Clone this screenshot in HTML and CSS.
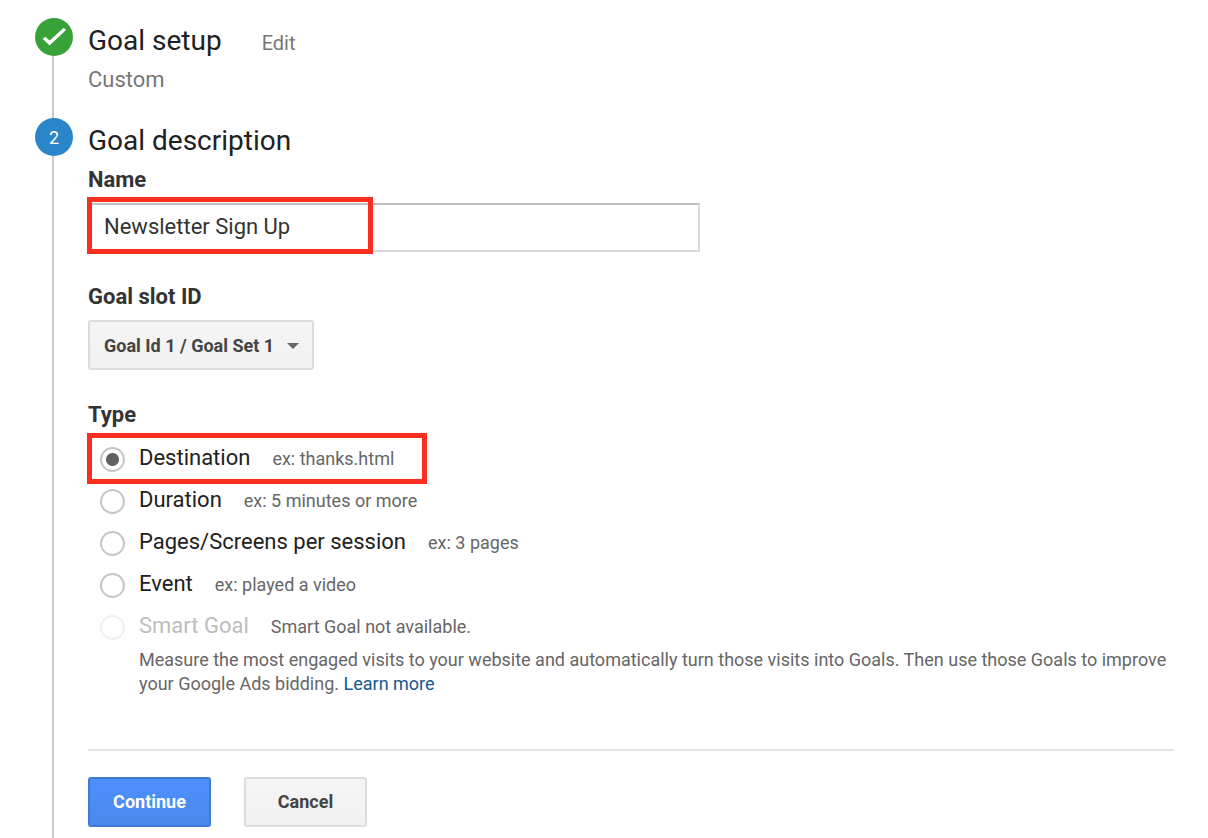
FILE: index.html
```html
<!DOCTYPE html>
<html lang="en">

<head>
    <meta charset="UTF-8">
    <meta name="viewport" content="width=device-width, initial-scale=1">
    <title>Goal setup</title>
    <link rel="stylesheet" href="styles.css">
</head>

<body>
    <main class="wizard">

        <!-- Step 1: done -->
        <section class="step">
            <div class="step-rail">
                <span class="step-badge done">
                    <svg width="38" height="38" viewBox="0 0 38 38" role="img" aria-label="Done">
                        <path d="M7.8 21 L10.2 18.7 L14.8 22.6 L28.7 9.8 L31 12 L14.6 27.6 Z" fill="#fff" />
                    </svg>
                </span>
            </div>
            <div class="step-body">
                <div class="step-heading">
                    <h2>Goal setup</h2>
                    <a href="#" class="edit-link">Edit</a>
                </div>
                <p class="step-summary">Custom</p>
            </div>
        </section>

        <!-- Step 2: current -->
        <section class="step current">
            <div class="step-rail">
                <span class="step-badge">2</span>
            </div>
            <form class="step-body">
                <div class="step-heading">
                    <h2>Goal description</h2>
                </div>

                <div class="form-group">
                    <label class="group-label" for="goalName">Name</label>
                    <div class="name-field">
                        <input type="text" id="goalName" name="goalName" value="Newsletter Sign Up">
                    </div>
                </div>

                <div class="form-group">
                    <label class="group-label" for="goalSlot">Goal slot ID</label>
                    <div class="select-box">
                        <select id="goalSlot" name="goalSlot">
                            <option>Goal Id 1 / Goal Set 1</option>
                        </select>
                    </div>
                </div>

                <fieldset class="type-group">
                    <legend class="group-label">Type</legend>
                    <div class="option highlighted">
                        <input type="radio" id="destination" name="goalType" checked>
                        <label for="destination">Destination</label>
                        <span class="hint">ex: thanks.html</span>
                    </div>
                    <div class="option">
                        <input type="radio" id="duration" name="goalType">
                        <label for="duration">Duration</label>
                        <span class="hint">ex: 5 minutes or more</span>
                    </div>
                    <div class="option">
                        <input type="radio" id="pages" name="goalType">
                        <label for="pages">Pages/Screens per session</label>
                        <span class="hint">ex: 3 pages</span>
                    </div>
                    <div class="option">
                        <input type="radio" id="event" name="goalType">
                        <label for="event">Event</label>
                        <span class="hint">ex: played a video</span>
                    </div>
                    <div class="option">
                        <input type="radio" id="smartGoal" name="goalType" disabled>
                        <label for="smartGoal">Smart Goal</label>
                        <span class="hint">Smart Goal not available.</span>
                    </div>
                    <p class="option-note">Measure the most engaged visits to your website and automatically turn those visits into Goals. Then use those Goals to improve your Google Ads bidding. <a href="#">Learn more</a></p>
                </fieldset>

                <div class="actions">
                    <button type="button" class="btn primary">Continue</button>
                    <button type="button" class="btn">Cancel</button>
                </div>
            </form>
        </section>

    </main>
</body>

</html>
```

FILE: styles.css
```css
*,
*::after {
    box-sizing: border-box;
}

body {
    margin: 0;
    background: #ffffff;
    color: #212121;
    font-family: Roboto, "Liberation Sans", sans-serif;
    font-size: 18px;
}

h2,
p {
    margin: 0;
    font-weight: 400;
}

.wizard {
    display: flex;
    flex-direction: column;
    min-height: 100vh;
    padding: 18px 34px 0 35px;
}

/* Steps */
.step {
    display: flex;
    gap: 15px;
}

.step.current {
    flex: 1;
}

.step-rail {
    display: flex;
    flex-direction: column;
    align-items: center;
    flex: 0 0 38px;
}

.step-rail::after {
    content: "";
    flex: 1;
    width: 2px;
    margin-right: 2px;
    background: #cacaca;
}

.step-badge {
    display: flex;
    align-items: center;
    justify-content: center;
    width: 38px;
    height: 38px;
    border-radius: 50%;
    background: #2a85c9;
    color: #ffffff;
    font-size: 18px;
}

.step-badge.done {
    background: #38a138;
}

.step-body {
    flex: 1;
    min-width: 0;
    padding-bottom: 11px;
}

.step-heading {
    display: flex;
    align-items: baseline;
    gap: 40px;
}

.step-heading h2 {
    font-size: 28px;
    line-height: 46px;
}

.edit-link {
    color: #777777;
    font-size: 20px;
    text-decoration: none;
}

.step-summary {
    color: #777777;
    font-size: 22px;
    line-height: 32px;
    margin-bottom: 11px;
}

/* Form */
.form-group {
    margin-bottom: 29px;
}

.group-label {
    display: block;
    padding: 0;
    margin-bottom: 7px;
    color: #333333;
    font-size: 22px;
    font-weight: 700;
    line-height: 32px;
}

.name-field {
    position: relative;
    max-width: 612px;
}

.name-field input {
    display: block;
    width: 100%;
    height: 49px;
    padding: 0 14px 2px;
    border: 2px solid #d9d9d9;
    border-top-color: #c0c0c0;
    color: #333333;
    font-family: inherit;
    font-size: 22px;
}

/* Red frames drawn over the important fields */
.name-field::after,
.highlighted::after {
    content: "";
    position: absolute;
    border: 5px solid #fa2f20;
    pointer-events: none;
}

.name-field::after {
    top: -6px;
    left: -1px;
    width: 286px;
    height: 57px;
}

.select-box {
    position: relative;
    width: 226px;
}

.select-box::after {
    content: "";
    position: absolute;
    top: 23px;
    right: 15px;
    border: 6px solid transparent;
    border-top-color: #666666;
    border-bottom: 0;
    pointer-events: none;
}

.select-box select {
    display: block;
    appearance: none;
    width: 100%;
    height: 50px;
    padding: 0 14px;
    border: 2px solid #dcdcdc;
    border-radius: 3px;
    background: linear-gradient(#f5f5f5, #f1f1f1);
    color: #444444;
    font-family: inherit;
    font-size: 18px;
    font-weight: 700;
}

.type-group {
    min-width: 0;
    margin: 0;
    padding: 0;
    border: 0;
}

.option {
    position: relative;
    display: flex;
    align-items: baseline;
    width: fit-content;
    height: 42px;
    padding-left: 12px;
    line-height: 40px;
}

.option input {
    appearance: none;
    align-self: center;
    width: 25px;
    height: 25px;
    margin: 0 14px 0 0;
    border: 2px solid #c6c6c6;
    border-radius: 50%;
    background: #ffffff;
}

.option input:checked {
    background: radial-gradient(circle, #616161 6px, #ffffff 7px);
}

.option input:disabled {
    border-color: #f0f0f0;
}

.option label {
    margin-right: 22px;
    font-size: 22px;
}

.option input:disabled + label {
    color: #bdbdbd;
}

.hint,
.option-note {
    color: #666666;
    font-size: 18px;
}

.highlighted::after {
    top: -5px;
    left: -1px;
    right: -33px;
    height: 51px;
}

.option-note {
    padding-left: 51px;
    line-height: 24px;
}

.option-note a {
    color: #15598f;
    text-decoration: none;
}

/* Buttons */
.actions {
    display: flex;
    gap: 33px;
    margin-top: 53px;
    padding-top: 26px;
    border-top: 2px solid #e4e4e4;
}

.btn {
    width: 123px;
    height: 50px;
    padding: 0 6px 2px;
    border: 2px solid #dcdcdc;
    border-radius: 3px;
    background: linear-gradient(#f5f5f5, #f1f1f1);
    color: #444444;
    font-family: inherit;
    font-size: 18px;
    font-weight: 700;
}

.btn.primary {
    border-color: #3f7bd3;
    background: linear-gradient(#4d90fe, #4a88ea);
    color: #ffffff;
}
```
